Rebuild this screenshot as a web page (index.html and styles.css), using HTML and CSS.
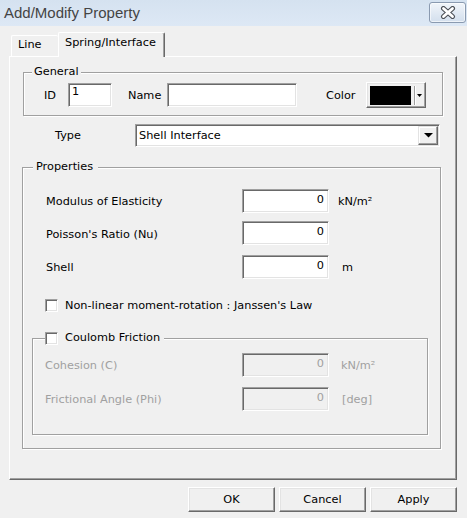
FILE: index.html
```html
<!DOCTYPE html>
<html>
<head>
<meta charset="utf-8">
<title>Add/Modify Property</title>
<link rel="stylesheet" href="styles.css">
</head>
<body>
<div class="titlebar">
  <div class="title">Add/Modify Property</div>
  <div class="close">
    <svg width="16" height="13" viewBox="0 0 16 13">
      <path d="M3.5 2.5 L12.5 10.5 M12.5 2.5 L3.5 10.5" stroke="#4b4f56" stroke-width="5" stroke-linecap="round"/>
      <path d="M3.5 2.5 L12.5 10.5 M12.5 2.5 L3.5 10.5" stroke="#ffffff" stroke-width="2.8" stroke-linecap="round"/>
    </svg>
  </div>
</div>

<div class="tabs">
  <div class="tab line">Line</div>
  <div class="tab active">Spring/Interface</div>
</div>

<div class="panel">
  <fieldset class="group general">
    <legend class="legend">General</legend>
    <div class="grow">
      <span class="lbl-id">ID</span>
      <div class="edit top id">1</div>
      <span class="lbl-name">Name</span>
      <div class="edit top name"></div>
      <span class="lbl-color">Color</span>
      <div class="colorbtn">
        <div class="swatch"></div>
        <div class="sep"></div>
        <svg class="minarrow" width="5" height="3" viewBox="0 0 5 3"><polygon points="0,0 5,0 2.5,3" fill="#000"/></svg>
      </div>
    </div>
  </fieldset>

  <div class="typerow">
    <span class="lbl-type">Type</span>
    <div class="select">
      <span class="seltext">Shell Interface</span>
      <div class="dropbtn">
        <svg width="9" height="5" viewBox="0 0 9 5"><polygon points="0,0 9,0 4.5,4.5" fill="#000"/></svg>
      </div>
    </div>
  </div>

  <fieldset class="group props">
    <legend class="legend">Properties</legend>
    <div class="frow r1">
      <span class="flbl">Modulus of Elasticity</span>
      <div class="edit num">0</div>
      <span class="unit">kN/m²</span>
    </div>
    <div class="frow r2">
      <span class="flbl low">Poisson's Ratio (Nu)</span>
      <div class="edit num">0</div>
    </div>
    <div class="frow r3">
      <span class="flbl">Shell</span>
      <div class="edit num">0</div>
      <span class="unit wide">m</span>
    </div>
    <div class="checkrow">
      <div class="cb"></div>
      <span class="cbtext">Non-linear moment-rotation : Janssen's Law</span>
    </div>

    <fieldset class="group coulomb">
      <legend class="legend cblegend">
        <span class="cb"></span>
        <span class="cbtext">Coulomb Friction</span>
      </legend>
      <div class="frow c1">
        <span class="flbl dis">Cohesion (C)</span>
        <div class="edit num disabled">0</div>
        <span class="unit dis">kN/m²</span>
      </div>
      <div class="frow c2">
        <span class="flbl dis">Frictional Angle (Phi)</span>
        <div class="edit num disabled">0</div>
        <span class="unit dis wide">[deg]</span>
      </div>
    </fieldset>
  </fieldset>
</div>

<div class="buttons">
  <div class="btn">OK</div>
  <div class="btn">Cancel</div>
  <div class="btn">Apply</div>
</div>
</body>
</html>
```

FILE: styles.css
```css
html, body {
  margin: 0;
  padding: 0;
}
body {
  width: 467px;
  height: 518px;
  overflow: hidden;
  background: #f0f0f0;
  font-family: "DejaVu Sans", sans-serif;
  font-size: 11.3px;
  color: #000;
}

/* title bar */
.titlebar {
  height: 26px;
  display: flex;
  justify-content: space-between;
  align-items: flex-start;
  background: linear-gradient(#d5e2f0, #dde8f5);
}
.title {
  font-family: "Liberation Sans", Arial, sans-serif;
  font-size: 15px;
  line-height: 26px;
  color: #444;
  padding-left: 4px;
}
.close {
  box-sizing: border-box;
  width: 37px;
  height: 21px;
  margin: 2px 1px 0 0;
  border: 1px solid #8a9ab0;
  border-radius: 3px;
  background: linear-gradient(#f1f5fa, #d3dfed);
  box-shadow: inset 0 0 0 1px rgba(255,255,255,0.6);
  display: flex;
  align-items: center;
  justify-content: center;
}

/* tabs */
.tabs {
  display: flex;
  align-items: flex-end;
  height: 24px;
  margin: 6px 0 0 11px;
}
.tab {
  box-sizing: border-box;
  border-top: 1px solid #fff;
  border-left: 1px solid #fff;
  border-radius: 2px 2px 0 0;
  padding-left: 6px;
  white-space: nowrap;
}
.tab.line {
  width: 47px;
  height: 21px;
  line-height: 18px;
}
.tab.active {
  position: relative;
  z-index: 1;
  width: 107px;
  height: 25px;
  margin-bottom: -1px;
  line-height: 20px;
  background: #f0f0f0;
  border-right: 1px solid #696969;
  box-shadow: inset -1px 0 0 #a0a0a0;
}

/* panel */
.panel {
  box-sizing: border-box;
  width: 448px;
  height: 424px;
  margin-left: 9px;
  padding-top: 8px;
  border-top: 1px solid #fff;
  border-left: 1px solid #fff;
  border-right: 1px solid #696969;
  border-bottom: 1px solid #696969;
  box-shadow: inset -1px -1px 0 #a0a0a0;
}

/* group boxes */
.group {
  box-sizing: border-box;
  margin: 0;
  padding: 0;
  min-width: 0;
  border: 1px solid #a0a0a0;
  box-shadow: inset 1px 1px 0 #fff, 1px 1px 0 #fff;
}
.legend {
  line-height: 14px;
  padding: 0 2px;
  background: #f0f0f0;
}
.general {
  width: 420px;
  margin-left: 13px;
  padding: 3px 0 7px;
}
.general .legend {
  margin-left: 8px;
}
.grow {
  display: flex;
  align-items: center;
  height: 26px;
}
.lbl-id {
  width: 24px;
  margin-left: 20px;
}
.lbl-name {
  width: 39px;
  margin-left: 16px;
}
.lbl-color {
  width: 40px;
  margin-left: 29px;
}

/* edits */
.edit {
  box-sizing: border-box;
  height: 24px;
  background: #fff;
  border: 1px solid;
  border-color: #a0a0a0 #fff #fff #a0a0a0;
  box-shadow: inset 1px 1px 0 #696969, inset -1px -1px 0 #e3e3e3;
  line-height: 14px;
}
.edit.top {
  padding: 1px 3px 0;
}
.edit.id {
  width: 44px;
}
.edit.name {
  width: 130px;
}
.edit.num {
  width: 87px;
  padding: 3px 4px 0;
  text-align: right;
}
.edit.disabled {
  background: #f0f0f0;
  color: #a0a0a0;
}

/* colour button */
.colorbtn {
  box-sizing: border-box;
  width: 60px;
  height: 26px;
  padding-left: 3px;
  display: flex;
  align-items: center;
  border: 1px solid;
  border-color: #fff #696969 #696969 #fff;
  box-shadow: inset -1px -1px 0 #a0a0a0, inset 1px 1px 0 #e3e3e3;
}
.swatch {
  width: 41px;
  height: 19px;
  background: #000;
}
.sep {
  width: 1px;
  height: 19px;
  margin-left: 3px;
  background: #a0a0a0;
  border-right: 1px solid #fff;
}
.minarrow {
  margin-left: 1px;
}

/* type row */
.typerow {
  display: flex;
  align-items: center;
  height: 23px;
  margin-top: 8px;
}
.lbl-type {
  width: 80px;
  margin-left: 45px;
}
.select {
  box-sizing: border-box;
  width: 305px;
  height: 23px;
  padding: 1px;
  display: flex;
  align-items: center;
  justify-content: space-between;
  background: #fff;
  border: 1px solid;
  border-color: #a0a0a0 #fff #fff #a0a0a0;
  box-shadow: inset 1px 1px 0 #696969, inset -1px -1px 0 #e3e3e3;
}
.seltext {
  padding-left: 2px;
}
.dropbtn {
  box-sizing: border-box;
  width: 20px;
  height: 19px;
  display: flex;
  align-items: center;
  justify-content: center;
  background: #f0f0f0;
  border: 1px solid;
  border-color: #e3e3e3 #696969 #696969 #e3e3e3;
  box-shadow: inset -1px -1px 0 #a0a0a0, inset 1px 1px 0 #fff;
}

/* properties */
.props {
  width: 419px;
  margin: 13px 0 0 12px;
  padding: 15px 0 13px;
}
.props > .legend {
  margin-left: 10px;
  padding: 0 5px 0 3px;
}
.frow {
  display: flex;
  align-items: center;
  height: 24px;
}
.r2 {
  margin-top: 8px;
}
.r3 {
  margin-top: 10px;
}
.flbl {
  width: 196px;
  margin-left: 23px;
  white-space: nowrap;
}
.flbl.low {
  padding-top: 3px;
}
.unit {
  margin-left: 9px;
}
.unit.wide {
  margin-left: 13px;
}
.dis {
  color: #a0a0a0;
}

.checkrow {
  display: flex;
  align-items: center;
  height: 13px;
  margin-top: 20px;
}
.cb {
  box-sizing: border-box;
  display: block;
  flex: none;
  width: 13px;
  height: 13px;
  background: #fff;
  border: 1px solid;
  border-color: #a0a0a0 #fff #fff #a0a0a0;
  box-shadow: inset 1px 1px 0 #696969, inset -1px -1px 0 #e3e3e3;
}
.checkrow .cb {
  margin-left: 22px;
}
.cbtext {
  margin-left: 7px;
  white-space: nowrap;
}

/* coulomb group */
.coulomb {
  width: 396px;
  margin: 19px 0 0 9px;
  padding: 8px 0 23px;
}
.cblegend {
  display: flex;
  align-items: center;
  height: 14px;
  margin-left: 12px;
  padding: 0 4px 0 0;
}
.coulomb .flbl {
  width: 197px;
  margin-left: 12px;
}
.coulomb .unit {
  margin-left: 12px;
}
.coulomb .unit.wide {
  margin-left: 13px;
}
.c2 {
  margin-top: 10px;
}

/* bottom buttons */
.buttons {
  display: flex;
  justify-content: flex-end;
  gap: 4px;
  margin: 7px 10px 0 0;
}
.btn {
  box-sizing: border-box;
  width: 87px;
  height: 25px;
  display: flex;
  align-items: center;
  justify-content: center;
  border: 1px solid;
  border-color: #fff #696969 #696969 #fff;
  box-shadow: inset -1px -1px 0 #a0a0a0, inset 1px 1px 0 #e3e3e3;
}
```
